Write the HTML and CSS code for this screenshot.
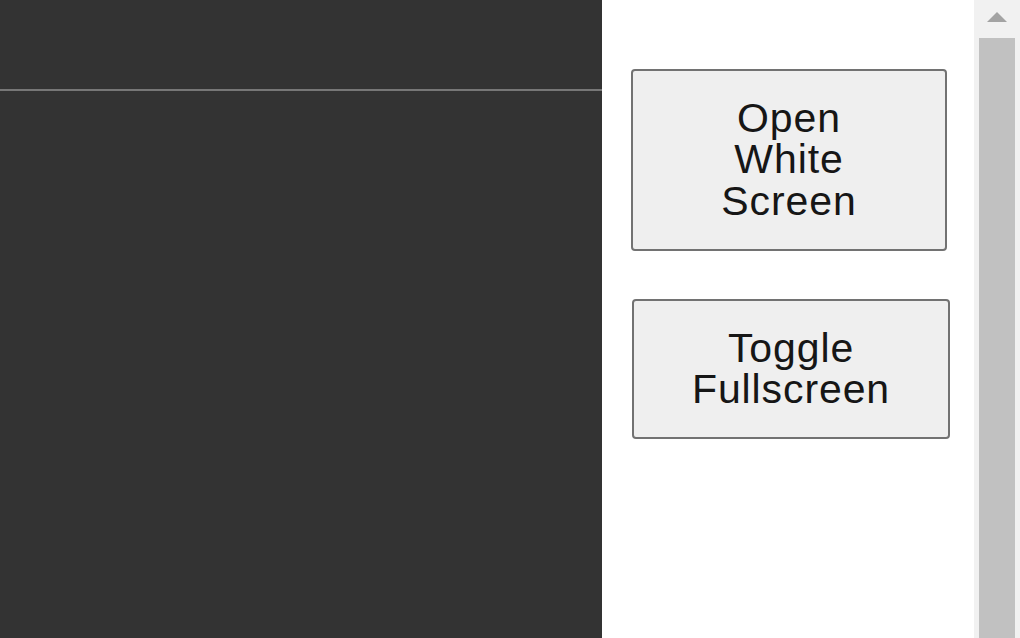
FILE: index.html
```html
<!DOCTYPE html>
<html>
<head>
<meta charset="utf-8">
<link rel="stylesheet" href="styles.css">
</head>
<body>
<div class="app">
  <div class="stage">
    <div class="stage-header"></div>
    <div class="stage-body"></div>
  </div>
  <div class="sidebar">
    <button class="btn btn-white">Open<br>White<br>Screen</button>
    <button class="btn btn-full">Toggle<br>Fullscreen</button>
  </div>
  <div class="scrollbar">
    <div class="scroll-up"><span class="arrow"></span></div>
    <div class="scroll-thumb"></div>
  </div>
</div>
</body>
</html>
```
FILE: styles.css
```css
html, body {
  margin: 0;
  padding: 0;
  height: 100%;
  overflow: hidden;
}
body {
  font-family: "Liberation Sans", Arial, sans-serif;
  background: #ffffff;
}
.app {
  display: flex;
  width: 1020px;
  height: 638px;
}
.stage {
  width: 602px;
  flex: none;
  background: #333333;
  display: flex;
  flex-direction: column;
}
.stage-header {
  height: 89px;
  border-bottom: 2px solid #777777;
  flex: none;
}
.stage-body {
  flex: 1;
}
.sidebar {
  width: 372px;
  flex: none;
  background: #ffffff;
  display: flex;
  flex-direction: column;
  align-items: flex-start;
  padding: 69px 0 0 29px;
  box-sizing: border-box;
  gap: 48px;
}
.btn {
  font-family: "Liberation Sans", Arial, sans-serif;
  font-size: 41px;
  line-height: 41.5px;
  letter-spacing: 0.9px;
  color: #161616;
  background: #efefef;
  border: 2px solid #727272;
  border-radius: 4px;
  padding: 0;
  margin: 0;
  text-align: center;
  box-sizing: border-box;
}
.btn-white {
  width: 316px;
  height: 182px;
}
.btn-full {
  width: 318px;
  height: 140px;
  margin-left: 1px;
}
.scrollbar {
  width: 46px;
  flex: none;
  background: #f1f1f1;
  display: flex;
  flex-direction: column;
  align-items: center;
}
.scroll-up {
  height: 38px;
  width: 100%;
  display: flex;
  justify-content: center;
  padding-top: 12px;
  box-sizing: border-box;
}
.arrow {
  width: 0;
  height: 0;
  border-left: 10px solid transparent;
  border-right: 10px solid transparent;
  border-bottom: 10px solid #a3a3a3;
}
.scroll-thumb {
  width: 36px;
  flex: 1;
  background: #c1c1c1;
}
```
